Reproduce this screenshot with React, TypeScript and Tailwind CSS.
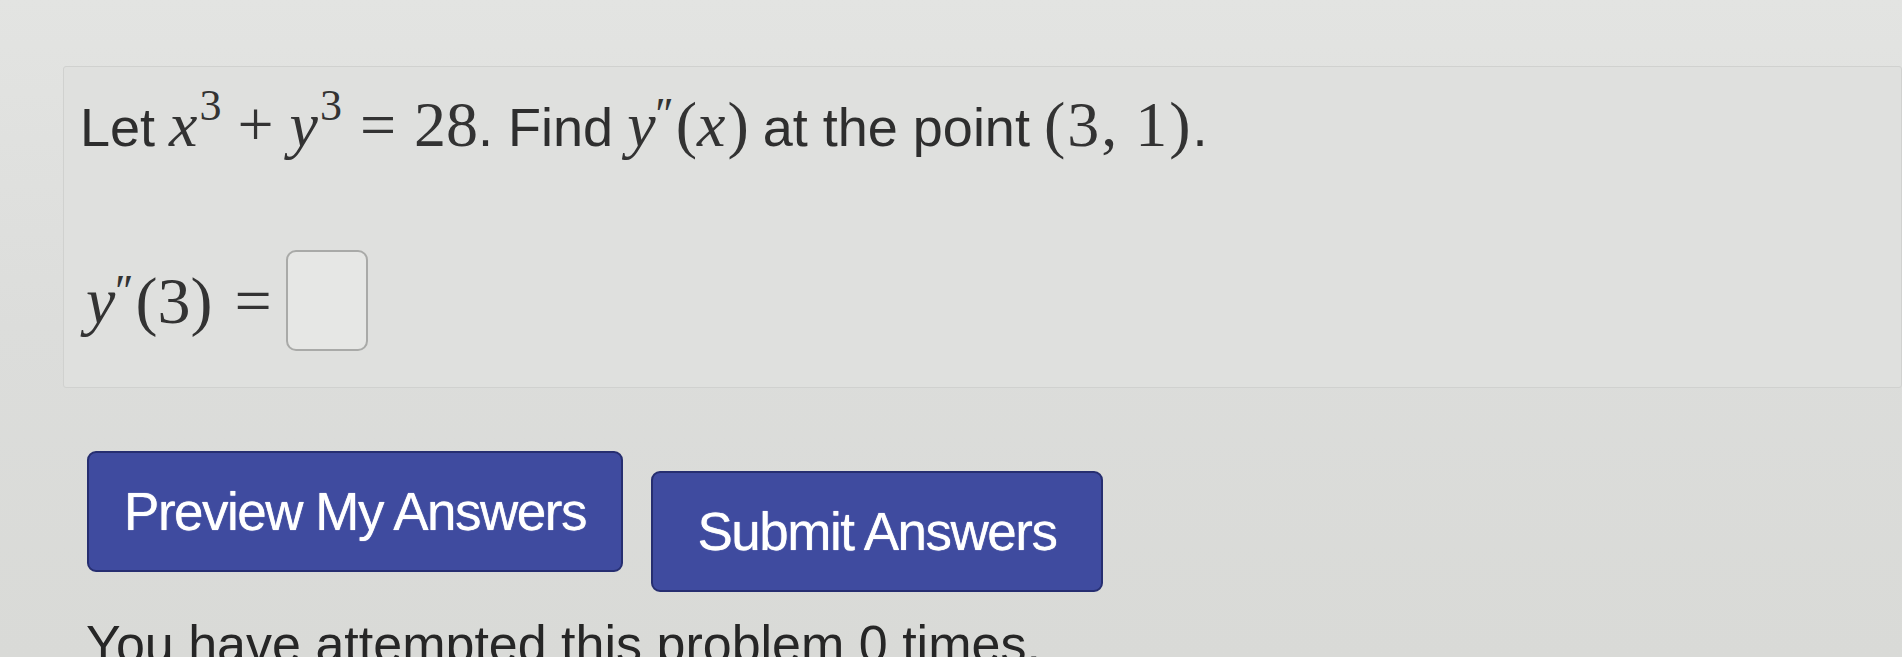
import React from "react";

const sans = { fontFamily: '"Liberation Sans", Arial, sans-serif' };
const serif = { fontFamily: '"Liberation Serif", "Times New Roman", serif' };

function MI({ children }: { children: React.ReactNode }) {
  return <span className="italic">{children}</span>;
}

function Sup({ children }: { children: React.ReactNode }) {
  return <span className="text-[44px] align-[26px] ml-[2px]">{children}</span>;
}

function Primes() {
  return <span className="text-[46px] align-[16px] tracking-[-2px] mr-[4px]">′′</span>;
}

export default function App() {
  return (
    <div
      className="w-[1902px] h-[657px] overflow-hidden bg-linear-to-b from-[#e3e4e2] via-[#dcdddb] to-[#d9dad7] pt-[66px]"
      style={sans}
    >
      <div className="ml-[63px] h-[322px] border border-[#d0d1cf] bg-[#dfe0de] rounded-[3px] pl-[16px] pt-[6px]">
        <div className="flex items-baseline text-[54px] leading-[66px] text-[#2e2e2e]">
          <span>Let</span>
          <span className="ml-[14px] text-[64px] text-[#333]" style={serif}>
            <MI>x</MI>
            <Sup>3</Sup>
            <span className="mx-[16px]">+</span>
            <MI>y</MI>
            <Sup>3</Sup>
            <span className="mx-[18px]">=</span>
            <span>28</span>
          </span>
          <span>. Find</span>
          <span className="ml-[14px] text-[64px] text-[#333]" style={serif}>
            <MI>y</MI>
            <Primes />
            <span>(</span>
            <MI>x</MI>
            <span className="ml-[2px]">)</span>
          </span>
          <span className="ml-[14px]">at the point</span>
          <span className="ml-[14px] text-[64px] text-[#333] tracking-[2px]" style={serif}>
            (3,<span className="ml-[16px]">1</span>)
          </span>
          <span>.</span>
        </div>

        <div className="mt-[90px] flex items-center pl-[6px]">
          <span className="text-[66px] text-[#333]" style={serif}>
            <MI>y</MI>
            <Primes />
            <span>(3)</span>
            <span className="ml-[22px]">=</span>
          </span>
          <div className="ml-[14px] w-[82px] h-[101px] rounded-[10px] border-2 border-[#a9aaa8] bg-[#e6e7e5]" />
        </div>
      </div>

      <div className="mt-[63px] ml-[87px] flex items-start gap-[28px]">
        <button
          className="w-[536px] h-[121px] rounded-[9px] bg-[#3f4b9f] border-2 border-[#262e70] text-white text-[53px] tracking-[-1.5px] flex items-center justify-center [text-shadow:0_0_1px_#fff]"
          style={sans}
        >
          Preview My Answers
        </button>
        <button
          className="mt-[20px] w-[452px] h-[121px] rounded-[9px] bg-[#3f4b9f] border-2 border-[#262e70] text-white text-[53px] tracking-[-1.5px] flex items-center justify-center [text-shadow:0_0_1px_#fff]"
          style={sans}
        >
          Submit Answers
        </button>
      </div>

      <div className="mt-[22px] ml-[86px] text-[52px] leading-[60px] text-[#262626] whitespace-nowrap" style={sans}>
        You have attempted this problem 0 times.
      </div>
    </div>
  );
}
